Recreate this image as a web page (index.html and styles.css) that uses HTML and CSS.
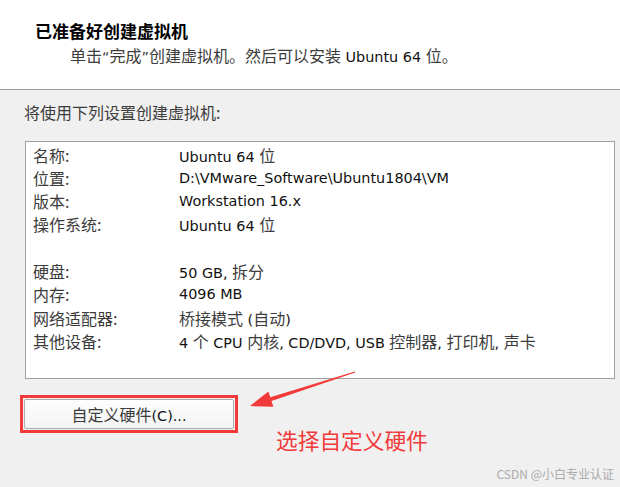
FILE: index.html
```html
<!DOCTYPE html>
<html lang="zh">
<head>
<meta charset="utf-8">
<link rel="stylesheet" href="styles.css">
</head>
<body>
<div class="page">
  <header class="head">
    <h1 class="title">已准备好创建虚拟机</h1>
    <p class="sub"><span class="zh">单击</span><span class="q">“</span><span class="zh">完成</span><span class="q">”</span><span class="zh">创建虚拟机。然后可以安装</span> Ubuntu 64 <span class="zh">位。</span></p>
  </header>
  <main class="main">
    <p class="lead zh">将使用下列设置创建虚拟机:</p>
    <div class="box">
      <div class="row"><span class="k">名称:</span><span class="v">Ubuntu 64 <span class="zh">位</span></span></div>
      <div class="row"><span class="k">位置:</span><span class="v">D:\VMware_Software\Ubuntu1804\VM</span></div>
      <div class="row"><span class="k">版本:</span><span class="v">Workstation 16.x</span></div>
      <div class="row"><span class="k">操作系统:</span><span class="v">Ubuntu 64 <span class="zh">位</span></span></div>
      <div class="row"></div>
      <div class="row"><span class="k">硬盘:</span><span class="v">50 GB, <span class="zh">拆分</span></span></div>
      <div class="row"><span class="k">内存:</span><span class="v">4096 MB</span></div>
      <div class="row"><span class="k">网络适配器:</span><span class="v"><span class="zh">桥接模式</span> (<span class="zh">自动</span>)</span></div>
      <div class="row"><span class="k">其他设备:</span><span class="v">4 <span class="zh">个</span> CPU <span class="zh">内核</span>, CD/DVD, USB <span class="zh">控制器</span>, <span class="zh">打印机</span>, <span class="zh">声卡</span></span></div>
    </div>
    <div class="act">
      <div class="mark"><button class="btn"><span class="zh">自定义硬件</span>(C)...</button></div>
      <p class="note">选择自定义硬件</p>
    </div>
    <p class="wm">CSDN @小白专业认证</p>
  </main>
  <svg class="arrow" width="115" height="48" viewBox="0 0 115 48">
    <polygon points="5,41 28.4,41.8 26.5,36.1 110.2,7.6 109.8,6.4 25.3,32.3 23.4,26.6" fill="#f23a3a"/>
  </svg>
</div>
</body>
</html>
```
FILE: styles.css
```css
* { box-sizing: border-box; }
html, body { margin: 0; padding: 0; }
body {
  width: 620px;
  height: 487px;
  overflow: hidden;
  background: #f0f0f0;
  font-family: "DejaVu Sans", "Noto Sans CJK SC", sans-serif;
  font-size: 14.4px;
  color: #111;
}
.page { position: relative; width: 620px; height: 487px; }
.zh { font-family: "Noto Sans CJK SC", sans-serif; font-size: 16px; color: #3c3c3c; }
.q { color: #3c3c3c; }
.head {
  height: 90px;
  background: #fff;
  border-bottom: 1px solid #a0a0a0;
  padding-top: 21px;
}
.title {
  margin: 0 0 0 35px;
  font-family: "Noto Sans CJK SC", sans-serif;
  font-size: 17px;
  font-weight: bold;
  line-height: 20px;
  color: #000;
}
.sub {
  margin: 4px 0 0 70px;
  line-height: 20px;
  color: #111;
}
.main { padding-top: 12px; }
.lead { margin: 0 0 0 24px; line-height: 20px; }
.box {
  margin: 19px 0 0 25px;
  width: 590px;
  height: 238px;
  background: #fff;
  border: 1px solid #a0a0a0;
  padding: 1.5px 0 0 7px;
}
.row { display: flex; height: 23.3px; line-height: 23.3px; white-space: nowrap; }
.k { width: 146px; flex: none; font-family: "Noto Sans CJK SC", sans-serif; font-size: 16px; color: #3c3c3c; }
.v { color: #111; }
.act { display: flex; align-items: flex-start; margin: 16px 0 0 20px; }
.mark {
  width: 218px;
  height: 38px;
  border: 3px solid #f23a3a;
  padding: 1px;
  flex: none;
}
.btn {
  width: 100%;
  height: 100%;
  border: 1px solid #adadad;
  border-radius: 2px;
  background: linear-gradient(#fdfdfd, #f4f4f4);
  font-family: "DejaVu Sans", "Noto Sans CJK SC", sans-serif;
  font-size: 14.4px;
  color: #111;
  padding: 0;
  line-height: 28px;
}
.note {
  margin: 31px 0 0 38px;
  font-family: "Noto Sans CJK SC", sans-serif;
  font-size: 21.7px;
  line-height: 28px;
  color: #f23a3a;
}
.wm {
  margin: 13px 6px 0 0;
  text-align: right;
  font-family: "Noto Sans CJK SC", sans-serif;
  font-size: 12px;
  line-height: 14px;
  color: #ababab;
}
.arrow { position: absolute; left: 245px; top: 365px; }
```
